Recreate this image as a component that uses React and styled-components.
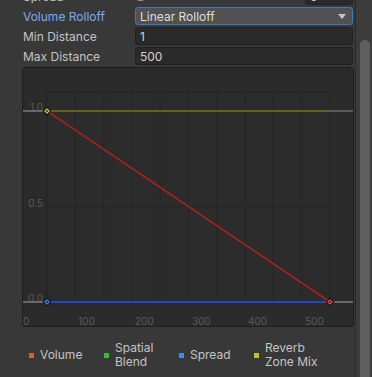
import React from 'react';
import styled, { createGlobalStyle } from 'styled-components';

const GlobalStyle = createGlobalStyle`
  html, body {
    margin: 0;
    padding: 0;
    background: #383838;
  }
  body {
    font-family: Inter, "Noto Sans", "Liberation Sans", sans-serif;
    font-size: 12px;
    color: #c4c4c4;
  }
`;

const Root = styled.div`
  display: flex;
  width: 372px;
  height: 377px;
  overflow: hidden;
  background: #383838;
`;

const Inspector = styled.div`
  flex: 1;
  display: flex;
  flex-direction: column;
  gap: 2px;
  min-width: 0;
`;

const PropertyRow = styled.div`
  display: flex;
  align-items: center;
  height: 18px;
  flex-shrink: 0;
  margin-top: ${(p) => (p.$scrolled ? '-13px' : '0')};
`;

const Label = styled.div`
  width: 112px;
  padding-left: 23px;
  flex-shrink: 0;
  color: ${(p) => (p.$active ? '#7ba9ef' : '#c4c4c4')};
  white-space: nowrap;
`;

const Field = styled.div`
  flex: ${(p) => (p.$width ? `0 0 ${p.$width}px` : '1')};
  height: 18px;
  box-sizing: border-box;
  margin-right: 2px;
  padding-left: 4px;
  display: flex;
  align-items: center;
  background: #2a2a2a;
  border: 1px solid #212121;
  border-radius: 3px;
  color: #d2d2d2;
`;

const Dropdown = styled(Field)`
  background: #515151;
  border-color: #3a79bb;
  color: #dedede;
  justify-content: space-between;
  padding-right: 6px;
`;

const Arrow = styled.span`
  width: 0;
  height: 0;
  border-left: 4px solid transparent;
  border-right: 4px solid transparent;
  border-top: 5px solid #c4c4c4;
`;

const Slider = styled.div`
  flex: 1;
  height: 18px;
  position: relative;
  margin-right: 5px;
`;

const SliderThumb = styled.span`
  position: absolute;
  left: 1px;
  top: 4px;
  width: 9px;
  height: 10px;
  border-radius: 4px;
  background: #999999;
`;

const CurvePanel = styled.div`
  height: 260px;
  margin: 0 1px 0 22px;
  box-sizing: border-box;
  background: #2b2b2b;
  border: 1px solid #1f1f1f;
  border-radius: 3px;
  overflow: hidden;
  flex-shrink: 0;

  svg {
    display: block;
  }
`;

const Legend = styled.div`
  display: grid;
  grid-template-columns: repeat(4, 75px);
  padding-left: 29px;
  margin-top: 12px;
  height: 28px;
`;

const LegendItem = styled.div`
  display: flex;
  align-items: center;
  gap: 6px;
  line-height: 14px;
  color: #c4c4c4;
`;

const Swatch = styled.span`
  width: 5px;
  height: 5px;
  flex-shrink: 0;
  background: ${(p) => p.$color};
`;

const ScrollTrack = styled.div`
  width: 16px;
  flex-shrink: 0;
  background: #3c3c3c;
  border-left: 1px solid #2a2a2a;
  display: flex;
  flex-direction: column;
  align-items: center;
`;

const ScrollThumb = styled.div`
  margin-top: 40px;
  margin-left: 2px;
  width: 10px;
  flex: 1;
  background: #5f5f5f;
  border-radius: 5px 5px 0 0;
`;

// curve geometry, in panel pixels
const GX0 = 25;
const GX1 = 308;
const GY1 = 44; // value 1.0
const GY0 = 235; // value 0.0
const STEP_X = (GX1 - GX0) / 10;
const STEP_Y = (GY0 - GY1) / 10;

const xTicks = [
  { t: '0', x: 1 },
  { t: '100', x: 56 },
  { t: '200', x: 113 },
  { t: '300', x: 170 },
  { t: '400', x: 226 },
  { t: '500', x: 283 },
];

function Key({ x, y, color }) {
  const d = (r) => `M${x} ${y - r} L${x + r} ${y} L${x} ${y + r} L${x - r} ${y} Z`;
  return (
    <g>
      <path d={d(4.5)} fill="#111" />
      <path d={d(3)} fill={color} />
      <path d={d(1.2)} fill="#222" />
    </g>
  );
}

function CurveChart() {
  const vLines = [];
  for (let i = 0; i <= 10; i++) vLines.push(GX0 + i * STEP_X);
  const top = GY1 - STEP_Y;
  return (
    <svg width="330" height="258" viewBox="1 1 330 258">
      <rect x={GX0} y={top} width={GX1 - GX0} height={GY0 - top} fill="#2c2c2c" stroke="#262626" />
      {vLines.map((x) => (
        <line key={x} x1={x} y1={top} x2={x} y2={GY0} stroke="#262626" strokeWidth="1" />
      ))}
      <line x1={GX0} y1={(GY0 + GY1) / 2} x2={GX1} y2={(GY0 + GY1) / 2} stroke="#262626" />

      <g fontFamily="Inter, 'Noto Sans', sans-serif" fontSize="10" fill="#5a5a5a">
        <text x="21" y={GY1} textAnchor="end">1.0</text>
        <text x="21" y={(GY0 + GY1) / 2} textAnchor="end">0.5</text>
        <text x="21" y={GY0} textAnchor="end">0.0</text>
        {xTicks.map((k) => (
          <text key={k.t} x={k.x} y="258">{k.t}</text>
        ))}
      </g>

      <line x1="0" y1={GY1} x2={GX0} y2={GY1} stroke="#7c7c7c" strokeWidth="1.5" />
      <line x1={GX1} y1={GY1} x2="332" y2={GY1} stroke="#6a6a6a" strokeWidth="1.5" />
      <line x1="0" y1={GY0} x2={GX0} y2={GY0} stroke="#7c7c7c" strokeWidth="1.5" />
      <line x1={GX1} y1={GY0} x2="332" y2={GY0} stroke="#7c7c7c" strokeWidth="1.5" />

      <line x1={GX0} y1={GY1} x2={GX1} y2={GY1} stroke="#77721f" strokeWidth="1.5" />
      <line x1={GX0} y1={GY0} x2={GX1} y2={GY0} stroke="#2246c4" strokeWidth="2" />
      <line x1={GX0} y1={GY1} x2={GX1} y2={GY0} stroke="#c81c1c" strokeWidth="1.5" />

      <Key x={GX0} y={GY1} color="#c9c23a" />
      <Key x={GX0} y={GY0} color="#3f7ee8" />
      <Key x={GX1} y={GY0} color="#e0503a" />
    </svg>
  );
}

const legend = [
  { color: '#e6553d', label: ['Volume'] },
  { color: '#43b23b', label: ['Spatial', 'Blend'] },
  { color: '#3d8cf0', label: ['Spread'] },
  { color: '#c3bd39', label: ['Reverb', 'Zone Mix'] },
];

export default function App() {
  return (
    <Root>
      <GlobalStyle />
      <Inspector>
        <PropertyRow $scrolled>
          <Label>Spread</Label>
          <Slider>
            <SliderThumb />
          </Slider>
          <Field $width={48}>0</Field>
        </PropertyRow>
        <PropertyRow>
          <Label $active>Volume Rolloff</Label>
          <Dropdown>
            Linear Rolloff
            <Arrow />
          </Dropdown>
        </PropertyRow>
        <PropertyRow>
          <Label>Min Distance</Label>
          <Field>1</Field>
        </PropertyRow>
        <PropertyRow>
          <Label>Max Distance</Label>
          <Field>500</Field>
        </PropertyRow>
        <CurvePanel>
          <CurveChart />
        </CurvePanel>
        <Legend>
          {legend.map((item) => (
            <LegendItem key={item.label[0]}>
              <Swatch $color={item.color} />
              <div>
                {item.label.map((l) => (
                  <div key={l}>{l}</div>
                ))}
              </div>
            </LegendItem>
          ))}
        </Legend>
      </Inspector>
      <ScrollTrack>
        <ScrollThumb />
      </ScrollTrack>
    </Root>
  );
}
